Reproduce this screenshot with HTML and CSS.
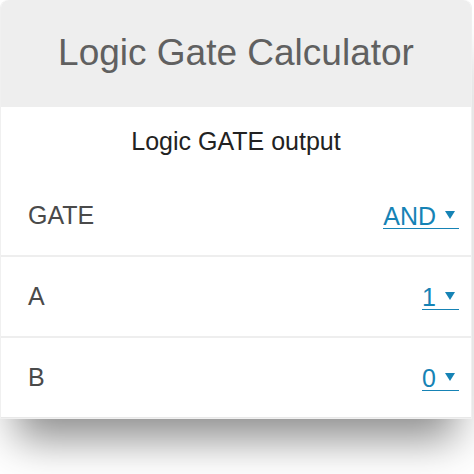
FILE: index.html
```html
<html>
<head>
<link rel="stylesheet" href="styles.css">
</head>
<body>
<div class="calc">
  <div class="calc-head">Logic Gate Calculator</div>
  <div class="calc-section">Logic GATE output</div>
  <div class="calc-row">
    <span class="label">GATE</span>
    <a class="pick" href="#">AND<svg class="caret" width="10" height="8" viewBox="0 0 10 8"><path d="M0 0H10L5 8Z"/></svg></a>
  </div>
  <div class="calc-row">
    <span class="label">A</span>
    <a class="pick" href="#">1<svg class="caret" width="10" height="8" viewBox="0 0 10 8"><path d="M0 0H10L5 8Z"/></svg></a>
  </div>
  <div class="calc-row last">
    <span class="label">B</span>
    <a class="pick" href="#">0<svg class="caret" width="10" height="8" viewBox="0 0 10 8"><path d="M0 0H10L5 8Z"/></svg></a>
  </div>
</div>
</body>
</html>
```

FILE: styles.css
```css
body {
  margin: 0;
  padding: 0 2px 0 0;
  background: #fff;
  font-family: "Liberation Sans", Arial, sans-serif;
}

.calc {
  background: #fff;
  border-radius: 8px 8px 0 0;
  border: 1px solid #f0f0f0;
  border-top: 0;
  box-shadow: 0 36px 40px -16px rgba(0,0,0,.45);
}

.calc-head {
  background: #eeeeee;
  border-radius: 8px 8px 0 0;
  height: 107px;
  display: flex;
  align-items: center;
  justify-content: center;
  font-size: 37px;
  color: #606060;
  padding-bottom: 2px;
  box-sizing: border-box;
}

.calc-section {
  height: 69px;
  display: flex;
  align-items: center;
  justify-content: center;
  font-size: 25px;
  color: #222;
}

.calc-row {
  height: 79px;
  display: flex;
  align-items: center;
  justify-content: space-between;
  padding: 0 12px 0 27px;
  border-bottom: 2px solid #eeeeee;
  font-size: 25px;
}

.calc-row.last {
  border-bottom: 1px solid #e8e8e8;
}

.label {
  color: #4a4a4a;
}

.pick {
  color: #1683b5;
  text-decoration: none;
  display: inline-flex;
  align-items: center;
  line-height: 24px;
  border-bottom: 1px solid #1683b5;
  padding-top: 2px;
}

.caret {
  fill: #1683b5;
  margin: 0 4px 0 9px;
  position: relative;
  top: -1px;
}
```
